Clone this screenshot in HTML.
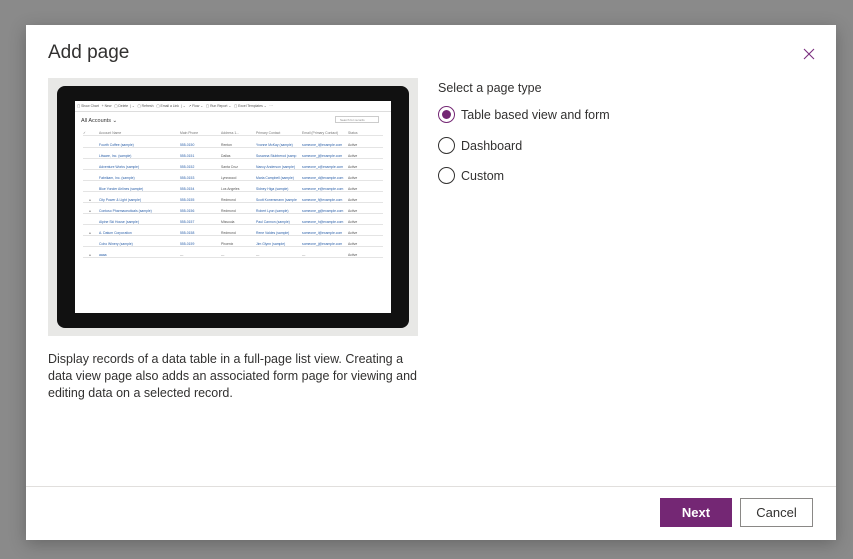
<!DOCTYPE html>
<html><head><style>
*{box-sizing:border-box;margin:0;padding:0}
body{width:853px;height:559px;background:#8a8a8a;font-family:"Liberation Sans",sans-serif;position:relative;overflow:hidden}
.dlg{position:absolute;left:26px;top:25px;width:810px;height:515px;background:#fff;box-shadow:0 4px 16px rgba(0,0,0,.25)}
h1{position:absolute;left:22px;top:17px;font-size:19px;font-weight:normal;color:#323130}
.x{position:absolute;left:777px;top:23px}
.img{position:absolute;left:22px;top:53px;width:370px;height:258px;background:#e8e8e6}
.tab{position:absolute;left:9px;top:8px;width:352px;height:242px;background:#111;border-radius:8px}
.scr{position:absolute;left:18px;top:15px;width:316px;height:212px;background:#fff;font-size:3.4px;color:#555;overflow:hidden}
.row{position:absolute;left:8px;width:300px;height:7px;border-bottom:0.5px solid #e4e4e4;white-space:nowrap}
.row span{position:absolute;top:2px}
.l{color:#2a5fa8}
.desc{position:absolute;left:22px;top:326px;width:380px;font-size:12.5px;line-height:17px;color:#323130}
.sel{position:absolute;left:412px;top:56px;font-size:12.5px;color:#323130}
.opt{position:absolute;left:412px;font-size:12.5px;color:#323130;display:flex;align-items:center}
.opt i{display:inline-block;width:17px;height:17px;border:1px solid #323130;border-radius:50%;margin-right:6px;position:relative}
.opt i.on{border-color:#742774}
.opt i.on:after{content:"";position:absolute;left:3px;top:3px;width:9px;height:9px;border-radius:50%;background:#742774}
.foot{position:absolute;left:0;top:461px;width:810px;border-top:1px solid #e1dfdd}
.btn{position:absolute;top:473px;height:29px;font-size:13px;display:flex;align-items:center;justify-content:center}
</style></head><body>
<div class="dlg">
<h1>Add page</h1>
<svg class="x" width="12" height="12" viewBox="0 0 12 12"><path d="M1 1L11 11M11 1L1 11" stroke="#7a2e7e" stroke-width="1.1"/></svg>
<div class="img"><div class="tab"><div class="scr">
<div style="position:absolute;left:2px;top:3px;white-space:nowrap">▢ Show Chart &nbsp; + New &nbsp; ▢ Delete &nbsp;| ⌄ &nbsp; ▢ Refresh &nbsp; ▢ Email a Link &nbsp;| ⌄ &nbsp; ↗ Flow ⌄ &nbsp; ▢ Run Report ⌄ &nbsp; ▢ Excel Templates ⌄ &nbsp; ···</div>
<div style="position:absolute;left:0;top:10px;width:316px;border-top:0.5px solid #ddd"></div>
<div style="position:absolute;left:6px;top:17px;font-size:5.5px;color:#333">All Accounts ⌄</div>
<div style="position:absolute;left:260px;top:15px;width:44px;height:7px;border:0.5px solid #ccc;font-size:3px;padding:1px 4px;color:#888">Search for records</div>
<div class="row" style="top:28px;color:#777"><span style="left:0">✓</span><span style="left:16px">Account Name</span><span style="left:97px">Main Phone</span><span style="left:138px">Address 1...</span><span style="left:173px">Primary Contact</span><span style="left:219px">Email (Primary Contact)</span><span style="left:265px">Status</span></div>
<div class="row" style="top:40px"><span class="l" style="left:16px">Fourth Coffee (sample)</span><span class="l" style="left:97px">555-0150</span><span style="left:138px">Renton</span><span class="l" style="left:173px">Yvonne McKay (sample)</span><span class="l" style="left:219px">someone_i@example.com</span><span style="left:265px">Active</span></div>
<div class="row" style="top:51px"><span class="l" style="left:16px">Litware, Inc. (sample)</span><span class="l" style="left:97px">555-0151</span><span style="left:138px">Dallas</span><span class="l" style="left:173px">Susanna Stubberod (samp</span><span class="l" style="left:219px">someone_j@example.com</span><span style="left:265px">Active</span></div>
<div class="row" style="top:62px"><span class="l" style="left:16px">Adventure Works (sample)</span><span class="l" style="left:97px">555-0152</span><span style="left:138px">Santa Cruz</span><span class="l" style="left:173px">Nancy Anderson (sample)</span><span class="l" style="left:219px">someone_c@example.com</span><span style="left:265px">Active</span></div>
<div class="row" style="top:73px"><span class="l" style="left:16px">Fabrikam, Inc. (sample)</span><span class="l" style="left:97px">555-0153</span><span style="left:138px">Lynnwood</span><span class="l" style="left:173px">Maria Campbell (sample)</span><span class="l" style="left:219px">someone_d@example.com</span><span style="left:265px">Active</span></div>
<div class="row" style="top:84px"><span class="l" style="left:16px">Blue Yonder Airlines (sample)</span><span class="l" style="left:97px">555-0154</span><span style="left:138px">Los Angeles</span><span class="l" style="left:173px">Sidney Higa (sample)</span><span class="l" style="left:219px">someone_e@example.com</span><span style="left:265px">Active</span></div>
<div class="row" style="top:95px"><span style="left:6px">⩓</span><span class="l" style="left:16px">City Power &amp; Light (sample)</span><span class="l" style="left:97px">555-0155</span><span style="left:138px">Redmond</span><span class="l" style="left:173px">Scott Konersmann (sample</span><span class="l" style="left:219px">someone_f@example.com</span><span style="left:265px">Active</span></div>
<div class="row" style="top:106px"><span style="left:6px">⩓</span><span class="l" style="left:16px">Contoso Pharmaceuticals (sample)</span><span class="l" style="left:97px">555-0156</span><span style="left:138px">Redmond</span><span class="l" style="left:173px">Robert Lyon (sample)</span><span class="l" style="left:219px">someone_g@example.com</span><span style="left:265px">Active</span></div>
<div class="row" style="top:117px"><span class="l" style="left:16px">Alpine Ski House (sample)</span><span class="l" style="left:97px">555-0157</span><span style="left:138px">Missoula</span><span class="l" style="left:173px">Paul Cannon (sample)</span><span class="l" style="left:219px">someone_h@example.com</span><span style="left:265px">Active</span></div>
<div class="row" style="top:128px"><span style="left:6px">⩓</span><span class="l" style="left:16px">A. Datum Corporation</span><span class="l" style="left:97px">555-0158</span><span style="left:138px">Redmond</span><span class="l" style="left:173px">Rene Valdes (sample)</span><span class="l" style="left:219px">someone_i@example.com</span><span style="left:265px">Active</span></div>
<div class="row" style="top:139px"><span class="l" style="left:16px">Coho Winery (sample)</span><span class="l" style="left:97px">555-0159</span><span style="left:138px">Phoenix</span><span class="l" style="left:173px">Jim Glynn (sample)</span><span class="l" style="left:219px">someone_j@example.com</span><span style="left:265px">Active</span></div>
<div class="row" style="top:150px"><span style="left:6px">⩓</span><span class="l" style="left:16px">aaaa</span><span style="left:97px">---</span><span style="left:138px">---</span><span style="left:173px">---</span><span style="left:219px">---</span><span style="left:265px">Active</span></div>
</div></div></div>
<div class="desc">Display records of a data table in a full-page list view. Creating a data view page also adds an associated form page for viewing and editing data on a selected record.</div>
<div class="sel">Select a page type</div>
<div class="opt" style="top:81px"><i class="on"></i>Table based view and form</div>
<div class="opt" style="top:112px"><i></i>Dashboard</div>
<div class="opt" style="top:142px"><i></i>Custom</div>
<div class="foot"></div>
<div class="btn" style="left:634px;width:72px;background:#742774;color:#fff;font-weight:bold">Next</div>
<div class="btn" style="left:714px;width:73px;border:1px solid #8a8886;color:#323130">Cancel</div>
</div>
</body></html>
